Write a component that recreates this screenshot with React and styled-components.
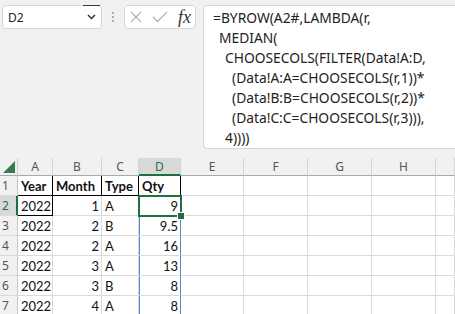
import React from 'react';
import styled, { createGlobalStyle } from 'styled-components';

const GlobalStyle = createGlobalStyle`
  html, body { margin: 0; padding: 0; background: #f1f1f1; overflow: hidden; }
  #root { width: 455px; height: 314px; overflow: hidden; }
`;

const Page = styled.div`
  width: 455px;
  height: 314px;
  overflow: hidden;
  background: #f1f1f1;
  font-family: Lato, "Noto Sans", sans-serif;
`;

const Bar = styled.div`
  display: flex;
  align-items: flex-start;
  box-sizing: border-box;
  height: 158px;
  width: 455px;
  padding: 5px 0 0 2px;
`;

const Field = styled.div`
  box-sizing: border-box;
  background: #fff;
  border: 1px solid #d6d6d6;
  border-radius: 4px;
`;

const NameBox = styled(Field)`
  width: 100px;
  height: 24px;
  display: flex;
  align-items: center;
  justify-content: space-between;
  padding: 0 1px 0 5px;
  font-family: "Noto Sans", sans-serif;
  font-size: 12px;
  color: #222;
`;

const Toggle = styled.span`
  box-sizing: border-box;
  align-self: flex-start;
  margin-top: -1px;
  width: 17px;
  height: 23px;
  border-top: 1px solid #3a3a3a;
  display: flex;
  align-items: center;
  justify-content: center;
`;

const Grip = styled.div`
  width: 22px;
  height: 24px;
  display: flex;
  align-items: center;
  justify-content: center;
`;

const FxBox = styled(Field)`
  width: 72px;
  height: 24px;
  display: flex;
  align-items: center;
  padding-left: 5px;
  gap: 10px;
`;

const FxLabel = styled.span`
  font-family: "Liberation Serif", serif;
  font-style: italic;
  font-size: 18px;
  color: #333;
  line-height: 1;
`;

const FormulaBox = styled(Field)`
  flex: 1;
  margin-left: 7px;
  height: 144px;
  padding: 2px 0 0 9px;
  border-right: none;
  border-top-right-radius: 0;
  border-bottom-right-radius: 0;
  overflow: hidden;
`;

const FormulaLine = styled.div`
  height: 20px;
  line-height: 20px;
  font-family: "Noto Sans", sans-serif;
  font-size: 13.8px;
  color: #222;
  white-space: nowrap;
  padding-left: ${p => p.$indent}px;
`;

const Grid = styled.div`
  display: grid;
  grid-template-columns: 18px 35px 49px 37px 42px 63px 64px 64px 64px 19px;
  grid-template-rows: 18px;
  grid-auto-rows: 20px;
  width: 455px;
`;

const GREEN = '#1f6f43';

const Corner = styled.div`
  box-sizing: border-box;
  background: #f1f1f1;
  border-right: 1px solid #d0d0d0;
  border-bottom: 1px solid #a9a9a9;
  display: flex;
  align-items: flex-start;
  padding: 3px 0 0 3px;
`;

const ColHead = styled.div`
  box-sizing: border-box;
  background: ${p => (p.$sel ? '#d9d9d9' : '#f1f1f1')};
  color: ${p => (p.$sel ? GREEN : '#555')};
  border-right: 1px solid #d4d4d4;
  border-bottom: ${p => (p.$sel ? `2px solid ${GREEN}` : '1px solid #a9a9a9')};
  font-family: "Noto Sans", sans-serif;
  font-size: 12px;
  line-height: 17px;
  text-align: center;
`;

const RowHead = styled.div`
  box-sizing: border-box;
  background: ${p => (p.$sel ? '#d9d9d9' : '#f1f1f1')};
  color: ${p => (p.$sel ? GREEN : '#555')};
  border-right: ${p => (p.$sel ? `2px solid ${GREEN}` : '1px solid #c8c8c8')};
  border-bottom: 1px solid #dadada;
  font-family: "Noto Sans", sans-serif;
  font-size: 12px;
  line-height: 19px;
  padding-left: 2px;
`;

const Cell = styled.div`
  position: relative;
  box-sizing: border-box;
  background: #fff;
  border-right: 1px solid ${p => (p.$boxed ? '#000' : p.$spill ? '#5b84c6' : '#dadada')};
  border-bottom: 1px solid ${p => (p.$boxed ? '#000' : '#dadada')};
  box-shadow: ${p => (p.$spill ? 'inset 1px 0 0 #5b84c6' : 'none')};
  padding: 2px 2px 0 3px;
  font-size: 13px;
  line-height: 17px;
  color: #111;
  font-weight: ${p => (p.$bold ? 700 : 400)};
  text-align: ${p => (p.$num ? 'right' : 'left')};
  white-space: nowrap;
  z-index: ${p => (p.$active ? 2 : 0)};

  ${p =>
    p.$active &&
    `
    &::after {
      content: '';
      position: absolute;
      left: -1px; top: -1px; right: -2px; bottom: -2px;
      border: 2px solid ${GREEN};
      pointer-events: none;
    }
  `}
`;

const FillHandle = styled.span`
  position: absolute;
  right: -5px;
  bottom: -5px;
  width: 6px;
  height: 6px;
  background: ${GREEN};
  border: 1px solid #fff;
  z-index: 3;
`;

const formula = [
  [0, '=BYROW(A2#,LAMBDA(r,'],
  [6, 'MEDIAN('],
  [12, 'CHOOSECOLS(FILTER(Data!A:D,'],
  [19, '(Data!A:A=CHOOSECOLS(r,1))*'],
  [19, '(Data!B:B=CHOOSECOLS(r,2))*'],
  [19, '(Data!C:C=CHOOSECOLS(r,3))),'],
  [12, '4))))'],
];

const cols = ['A', 'B', 'C', 'D', 'E', 'F', 'G', 'H', ''];

const data = [
  ['Year', 'Month', 'Type', 'Qty'],
  [2022, 1, 'A', 9],
  [2022, 2, 'B', 9.5],
  [2022, 2, 'A', 16],
  [2022, 3, 'A', 13],
  [2022, 3, 'B', 8],
  [2022, 4, 'A', 8],
];

export default function App() {
  return (
    <Page>
      <GlobalStyle />
      <Bar>
        <NameBox>
          <span>D2</span>
          <Toggle>
            <svg width="9" height="6" viewBox="0 0 9 6">
              <polyline points="1,1 4.5,4.5 8,1" fill="none" stroke="#333" strokeWidth="1.5" />
            </svg>
          </Toggle>
        </NameBox>
        <Grip>
          <svg width="4" height="12" viewBox="0 0 4 12">
            <circle cx="2" cy="2" r="1" fill="#9a9a9a" />
            <circle cx="2" cy="6" r="1" fill="#9a9a9a" />
            <circle cx="2" cy="10" r="1" fill="#9a9a9a" />
          </svg>
        </Grip>
        <FxBox>
          <svg width="12" height="12" viewBox="0 0 12 12">
            <path d="M1 1 L11 11 M11 1 L1 11" stroke="#b4b4b4" strokeWidth="1.3" fill="none" />
          </svg>
          <svg width="16" height="12" viewBox="0 0 16 12">
            <polyline points="1,6 5.5,10.5 15,1" stroke="#b4b4b4" strokeWidth="1.3" fill="none" />
          </svg>
          <FxLabel>fx</FxLabel>
        </FxBox>
        <FormulaBox>
          {formula.map(([ind, t], i) => (
            <FormulaLine key={i} $indent={ind}>{t}</FormulaLine>
          ))}
        </FormulaBox>
      </Bar>
      <Grid>
        <Corner>
          <svg width="12" height="12" viewBox="0 0 12 12">
            <polygon points="12,0 12,12 0,12" fill="#3b7a50" />
          </svg>
        </Corner>
        {cols.map((c, i) => (
          <ColHead key={i} $sel={c === 'D'}>{c}</ColHead>
        ))}
        {data.map((row, r) => (
          <React.Fragment key={r}>
            <RowHead $sel={r === 1}>{r + 1}</RowHead>
            {cols.map((c, ci) => {
              const v = ci < 4 ? row[ci] : '';
              const isNum = typeof v === 'number';
              const boxed = r === 0 ? ci < 4 : r === 1 && ci === 0;
              const active = r === 1 && ci === 3;
              const spill = r > 1 && ci === 3;
              return (
                <Cell
                  key={ci}
                  $num={isNum}
                  $bold={r === 0}
                  $boxed={boxed}
                  $active={active}
                  $spill={spill}
                >
                  {v}
                  {active && <FillHandle />}
                </Cell>
              );
            })}
          </React.Fragment>
        ))}
      </Grid>
    </Page>
  );
}
